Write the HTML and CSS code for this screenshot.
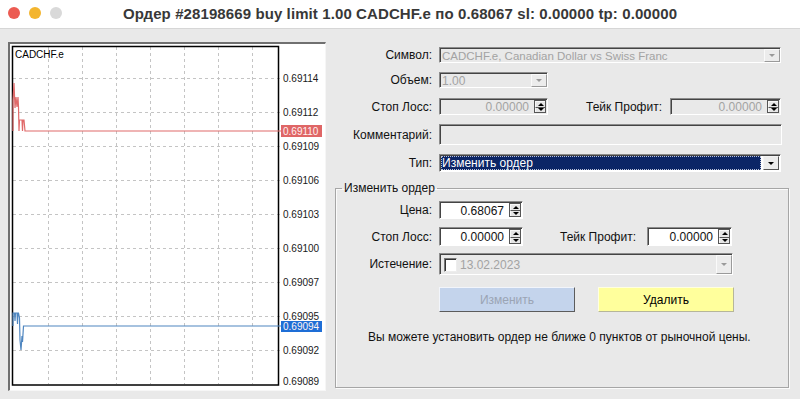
FILE: index.html
```html
<!DOCTYPE html>
<html lang="ru">
<head>
<meta charset="utf-8">
<title>Ордер</title>
<link rel="stylesheet" href="styles.css">
</head>
<body>
<div class="window">
  <div class="titlebar">
    <div class="lights"><span class="light red"></span><span class="light yellow"></span><span class="light grey"></span></div>
    <div class="title">Ордер #28198669 buy limit 1.00 CADCHF.e по 0.68067 sl: 0.00000 tp: 0.00000</div>
    <div></div>
  </div>
  <div class="content">
    <div class="chart">
      <svg class="chart-svg" width="315" height="346" viewBox="10 44 315 346">
        <g class="grid">
          <line x1="48.5" y1="47" x2="48.5" y2="384"/>
          <line x1="82.5" y1="47" x2="82.5" y2="384"/>
          <line x1="116.5" y1="47" x2="116.5" y2="384"/>
          <line x1="150.5" y1="47" x2="150.5" y2="384"/>
          <line x1="184.5" y1="47" x2="184.5" y2="384"/>
          <line x1="218.5" y1="47" x2="218.5" y2="384"/>
          <line x1="252.5" y1="47" x2="252.5" y2="384"/>
          <line x1="13" y1="78.5" x2="282" y2="78.5"/>
          <line x1="13" y1="112.5" x2="282" y2="112.5"/>
          <line x1="13" y1="146.5" x2="282" y2="146.5"/>
          <line x1="13" y1="180.5" x2="282" y2="180.5"/>
          <line x1="13" y1="214.5" x2="282" y2="214.5"/>
          <line x1="13" y1="248.5" x2="282" y2="248.5"/>
          <line x1="13" y1="282.5" x2="282" y2="282.5"/>
          <line x1="13" y1="316.5" x2="282" y2="316.5"/>
          <line x1="13" y1="350.5" x2="282" y2="350.5"/>
        </g>
        <rect class="plot" x="12.5" y="46.5" width="266" height="338.5"/>
        <text class="sym" x="15" y="57.5">CADCHF.e</text>
        <path class="red-line" d="M13,131 L13,100 L14,83 L15,108 L16,97 L17,107 L18,97 L18.5,107 L19,131 L19.5,120 L22,120 L22.5,131 L23,120 L24,120 L25,131 L281,131"/>
        <path class="blue-line" d="M13,326 L13,313 L14.5,313 L15,321 L15.5,313 L17,313 L17.5,324 L18,313 L18.5,313 L19.5,318 L20,340 L21,350 L22,336 L22.5,342 L23.5,326 L281,326"/>
        <g class="labels">
          <text x="283" y="81.5">0.69114</text>
          <text x="283" y="115.5">0.69112</text>
          <text x="283" y="149.5">0.69109</text>
          <text x="283" y="183.5">0.69106</text>
          <text x="283" y="217.5">0.69103</text>
          <text x="283" y="251.5">0.69100</text>
          <text x="283" y="285.5">0.69097</text>
          <text x="283" y="319.5">0.69095</text>
          <text x="283" y="353.5">0.69092</text>
          <text x="283" y="385">0.69089</text>
        </g>
        <rect class="red-box" x="281" y="125" width="41" height="12"/>
        <text class="box-text" x="283" y="134.5">0.69110</text>
        <rect class="blue-box" x="281" y="321" width="41" height="11"/>
        <text class="box-text" x="283" y="330">0.69094</text>
      </svg>
    </div>

    <div class="form">
      <div class="row r1">
        <span class="lbl">Символ:</span>
        <div class="field disabled w-symbol">
          <span class="val small">CADCHF.e, Canadian Dollar vs Swiss Franc</span>
          <span class="dd"><i class="tri-down dim"></i></span>
        </div>
      </div>
      <div class="row r2">
        <span class="lbl">Объем:</span>
        <div class="field disabled w-vol">
          <span class="val">1.00</span>
          <span class="dd"><i class="tri-down dim"></i></span>
        </div>
      </div>
      <div class="row r3">
        <span class="lbl">Стоп Лосс:</span>
        <div class="field disabled w-vol">
          <span class="num">0.00000</span>
          <span class="spin"><i><b class="tri-up"></b></i><i><b class="tri-down"></b></i></span>
        </div>
        <span class="lbl lbl-tp">Тейк Профит:</span>
        <div class="field disabled w-tp">
          <span class="num">0.00000</span>
          <span class="spin"><i><b class="tri-up"></b></i><i><b class="tri-down"></b></i></span>
        </div>
      </div>
      <div class="row r4">
        <span class="lbl">Комментарий:</span>
        <div class="field disabled w-comment"></div>
      </div>
      <div class="row r5">
        <span class="lbl">Тип:</span>
        <div class="field w-symbol type">
          <span class="sel">Изменить ордер</span>
          <span class="dd dark"><i class="tri-down"></i></span>
        </div>
      </div>

      <fieldset class="group">
        <legend>Изменить ордер</legend>
        <div class="row g1">
          <span class="lbl g-lbl">Цена:</span>
          <div class="field w-price">
            <span class="num">0.68067</span>
            <span class="spin"><i><b class="tri-up"></b></i><i><b class="tri-down"></b></i></span>
          </div>
        </div>
        <div class="row g2">
          <span class="lbl g-lbl">Стоп Лосс:</span>
          <div class="field w-price">
            <span class="num">0.00000</span>
            <span class="spin"><i><b class="tri-up"></b></i><i><b class="tri-down"></b></i></span>
          </div>
          <span class="lbl lbl-gtp">Тейк Профит:</span>
          <div class="field w-gtp">
            <span class="num">0.00000</span>
            <span class="spin"><i><b class="tri-up"></b></i><i><b class="tri-down"></b></i></span>
          </div>
        </div>
        <div class="row g3">
          <span class="lbl g-lbl">Истечение:</span>
          <div class="field disabled w-exp">
            <span class="check"></span>
            <span class="val date">13.02.2023</span>
            <span class="dd"><i class="tri-down dim"></i></span>
          </div>
        </div>
        <div class="row buttons">
          <button class="btn btn-modify" type="button">Изменить</button>
          <button class="btn btn-delete" type="button">Удалить</button>
        </div>
        <p class="msg">Вы можете установить ордер не ближе 0 пунктов от рыночной цены.</p>
      </fieldset>
    </div>
  </div>
</div>
</body>
</html>
```

FILE: styles.css
```css
* { box-sizing: border-box; }

html, body {
  margin: 0;
  padding: 0;
}

body {
  width: 800px;
  height: 399px;
  overflow: hidden;
  background: #e9e9e9;
  font-family: "Liberation Sans", Arial, sans-serif;
  font-size: 12px;
  color: #111;
}

.window {
  width: 800px;
  height: 399px;
  background: #e9e9e9;
}

/* title bar */
.titlebar {
  height: 29px;
  background: #ffffff;
  border-bottom: 1px solid #d6d6d6;
  display: grid;
  grid-template-columns: 1fr auto 1fr;
  align-items: center;
}

.lights {
  display: flex;
  gap: 9px;
  padding-left: 8px;
  margin-top: -2px;
}

.light {
  width: 12px;
  height: 12px;
  border-radius: 50%;
  display: block;
}

.light.red { background: #ec5b52; }
.light.yellow { background: #f3b52e; }
.light.grey { background: #d9d9d9; }

.title {
  font-size: 15px;
  font-weight: bold;
  color: #383838;
  white-space: nowrap;
  margin-top: -2px;
  letter-spacing: 0.1px;
}

/* content */
.content {
  display: flex;
  padding: 13px 0 0 8px;
}

.chart {
  width: 318px;
  height: 349px;
  flex: none;
  background: #ffffff;
  border-top: 2px solid #707070;
  border-left: 2px solid #707070;
  border-right: 1px solid #f6f6f6;
  border-bottom: 1px solid #f6f6f6;
}

.chart-svg {
  display: block;
}

.grid line {
  stroke: #c4c4c4;
  stroke-width: 1;
  stroke-dasharray: 3 3;
}

.plot {
  fill: none;
  stroke: #000;
  stroke-width: 1.5;
}

.sym {
  font-family: "Liberation Sans", Arial, sans-serif;
  font-size: 10px;
  fill: #000;
}

.red-line {
  fill: none;
  stroke: #e06a6a;
  stroke-width: 1.2;
}

.blue-line {
  fill: none;
  stroke: #4f86c0;
  stroke-width: 1.2;
}

.labels text {
  font-family: "Liberation Sans", Arial, sans-serif;
  font-size: 10px;
  fill: #1a1a1a;
}

.red-box { fill: #df6666; }
.blue-box { fill: #1e6ed6; }

.box-text {
  font-family: "Liberation Sans", Arial, sans-serif;
  font-size: 10px;
  fill: #fff2f2;
}

/* form */
.form {
  margin-left: 9px;
  width: 454px;
  display: flex;
  flex-direction: column;
}

.row {
  display: flex;
  align-items: center;
}

.r1 { margin-top: 5px; height: 16px; }
.r2 { margin-top: 9px; height: 16px; }
.r3 { margin-top: 10px; height: 17px; }
.r4 { margin-top: 9px; height: 21px; }
.r5 { margin-top: 9px; height: 18px; }

.lbl {
  width: 97px;
  flex: none;
  text-align: right;
  margin-right: 7px;
  white-space: nowrap;
}

.lbl-tp {
  width: 114px;
  margin-right: 8px;
}

.field {
  height: 100%;
  display: flex;
  align-items: stretch;
  background: #ffffff;
  border: 1px solid;
  border-color: #8c8c8c #ffffff #ffffff #8c8c8c;
  box-shadow: inset 1px 1px 0 #444;
  flex: none;
  padding: 1px 0 0 1px;
  overflow: hidden;
}

.field.disabled {
  background: #e9e9e9;
  color: #a3a3a3;
}

.w-symbol { width: 342px; }
.w-vol { width: 109px; }
.w-tp { width: 111px; }
.w-comment { width: 343px; }

.val {
  flex: 1;
  padding-left: 1px;
  display: flex;
  align-items: center;
  white-space: nowrap;
}

.val.small {
  font-size: 11.5px;
}

.num {
  flex: 1;
  text-align: right;
  padding-right: 5px;
  display: flex;
  align-items: center;
  justify-content: flex-end;
}

.dd {
  width: 16px;
  flex: none;
  display: flex;
  align-items: center;
  justify-content: center;
  background: #ececec;
  border: 1px solid;
  border-color: #fafafa #9a9a9a #9a9a9a #fafafa;
}

.dd.dark {
  border-color: #f4f4f4 #555 #555 #f4f4f4;
  margin: 0 1px 1px 2px;
}

.tri-down {
  display: block;
  width: 0;
  height: 0;
  border-left: 3px solid transparent;
  border-right: 3px solid transparent;
  border-top: 3px solid #000;
}

.tri-down.dim { border-top-color: #9a9a9a; }

.tri-up {
  display: block;
  width: 0;
  height: 0;
  border-left: 3px solid transparent;
  border-right: 3px solid transparent;
  border-bottom: 3px solid #000;
}

.spin {
  width: 12px;
  flex: none;
  display: flex;
  flex-direction: column;
  border: 1px solid #555;
  background: #e6e6e6;
  margin: 0 1px 1px 0;
}

.spin i {
  flex: 1;
  display: flex;
  align-items: center;
  justify-content: center;
  border-top: 1px solid #f8f8f8;
  border-left: 1px solid #f8f8f8;
}

.spin i + i {
  border-top: 1px solid #555;
}

.type {
  padding: 1px 0 0 1px;
}

.sel {
  flex: 1;
  background: #0b2566;
  color: #ffffff;
  display: flex;
  align-items: center;
  padding-left: 1px;
  outline: 1px dotted #b8c0d8;
  outline-offset: -1px;
  margin: 0 0 1px 0;
  white-space: nowrap;
}

/* group */
.group {
  margin: 9px 0 0 0;
  padding: 0;
  height: 207px;
  border: 1px solid #a6a6a6;
  box-shadow: inset 1px 1px 0 #fbfbfb, 1px 1px 0 #fbfbfb;
  min-inline-size: 0;
}

.group legend {
  margin-left: 6px;
  padding: 0 2px;
  font-size: 12px;
  line-height: 14px;
}

.g-lbl { width: 96px; }

.g1 { margin-top: 6px; height: 18px; }
.g2 { margin-top: 8px; height: 19px; }
.g3 { margin-top: 7px; height: 22px; }

.w-price { width: 84px; }
.w-gtp { width: 85px; }
.w-exp { width: 294px; }

.lbl-gtp {
  width: 113px;
  margin-right: 11px;
}

.check {
  width: 13px;
  height: 14px;
  flex: none;
  align-self: center;
  margin: 0 3px 0 3px;
  background: #ffffff;
  border: 1px solid;
  border-color: #777 #ededed #ededed #777;
  box-shadow: inset 1px 1px 0 #333;
}

.date { padding-left: 0; }

.buttons {
  margin-top: 12px;
  height: 25px;
  padding-left: 103px;
  gap: 23px;
}

.btn {
  width: 136px;
  height: 25px;
  font-family: "Liberation Sans", Arial, sans-serif;
  font-size: 12px;
  border: 1px solid;
  padding: 0;
  margin: 0;
}

.btn-modify {
  background: #c4d4ec;
  color: #9ba4b4;
  border-color: #f2f5fb #5c5c5c #5c5c5c #f2f5fb;
}

.btn-delete {
  background: #ffff9c;
  color: #000;
  border-color: #ffffe0 #b6b69a #b6b69a #ffffe0;
}

.msg {
  margin: 18px 0 0 32px;
  line-height: 14px;
  white-space: nowrap;
}
```
